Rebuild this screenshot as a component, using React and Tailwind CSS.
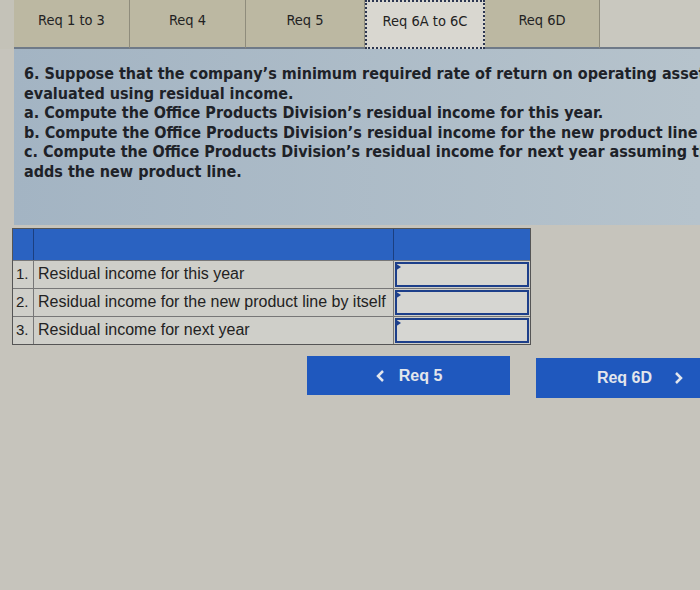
import React from 'react';

const tabs = ['Req 1 to 3', 'Req 4', 'Req 5', 'Req 6A to 6C', 'Req 6D'];
const tabWidths = ['w-[116px]', 'w-[116px]', 'w-[119px]', 'w-[120px]', 'w-[115px]'];

const lines = [
    "6. Suppose that the company\u2019s minimum required rate of return on operating assets is 15% and that performance is",
    'evaluated using residual income.',
    'a. Compute the Office Products Division\u2019s residual income for this year.',
    'b. Compute the Office Products Division\u2019s residual income for the new product line by itself.',
    'c. Compute the Office Products Division\u2019s residual income for next year assuming that it',
    'adds the new product line.',
];

const rows = [
    'Residual income for this year',
    'Residual income for the new product line by itself',
    'Residual income for next year',
];

export default function App() {
    return (
        <div className="w-[700px] h-[590px] overflow-hidden bg-[#c6c4bc] font-['Liberation_Sans',sans-serif]">
            {/* tab bar */}
            <div className="flex h-[49px] pl-[14px] bg-[#c4c2b8]">
                {tabs.map((t, i) => (
                    <div
                        key={t}
                        className={
                            tabWidths[i] +
                            ' flex items-center justify-center text-[14.5px] text-[#222] font-["DejaVu_Sans_Condensed",sans-serif] ' +
                            (i === 3
                                ? 'bg-[#d9d7d0] border-2 border-dotted border-[#2b3550] pb-[5px]'
                                : 'bg-[#bcb8a2] border-r border-[#8f8c7c] border-b-2 border-b-[#6f7a88] pb-[6px]')
                        }
                    >
                        {t}
                    </div>
                ))}
                <div className="flex-1 bg-[#c9c8bf] border-b-2 border-b-[#6f7a88]" />
            </div>

            {/* question */}
            <div className="ml-[14px] h-[176px] bg-gradient-to-r from-[#a3b4c3] to-[#b6c3cc] pt-[15px] pl-[10px] overflow-hidden">
                {lines.map((l) => (
                    <div
                        key={l}
                        className="whitespace-nowrap text-[16px] leading-[19.6px] text-[#1e2228] font-bold font-['DejaVu_Sans_Condensed',sans-serif]"
                    >
                        {l}
                    </div>
                ))}
            </div>

            {/* table */}
            <div className="mt-[3px] ml-[12px] w-[519px] border border-[#555]">
                <div className="flex h-[31px] bg-[#2a62c1]">
                    <div className="w-[21px] border-r border-[#1b3f80]" />
                    <div className="w-[360px] border-r border-[#1b3f80]" />
                    <div className="flex-1" />
                </div>
                {rows.map((r, i) => (
                    <div key={r} className="flex h-[28px] bg-[#cfcfc9] border-t border-[#777]">
                        <div className="w-[21px] border-r border-[#777] text-[15px] leading-[26px] text-[#222] pl-[3px]">
                            {i + 1}.
                        </div>
                        <div className="w-[360px] border-r border-[#777] text-[16px] leading-[26px] text-[#222] pl-[4px] whitespace-nowrap">
                            {r}
                        </div>
                        <div className="flex-1 relative p-[1px]">
                            <div className="h-full border-2 border-[#1d3f8a] bg-[#d6d6d2]" />
                            <div className="absolute left-[1px] top-[2px] w-0 h-0 border-t-[4px] border-b-[4px] border-l-[6px] border-t-transparent border-b-transparent border-l-[#1d3f8a]" />
                        </div>
                    </div>
                ))}
            </div>

            {/* nav buttons */}
            <div className="flex mt-[11px] ml-[307px] gap-[26px]">
                <div className="w-[203px] h-[39px] bg-[#1f58be] flex items-center justify-center gap-[14px] text-[#e3e6ec] font-bold text-[16px]">
                    <svg width="10" height="14" viewBox="0 0 10 14">
                        <path d="M8 2 L3 7 L8 12" fill="none" stroke="currentColor" strokeWidth="2.5" />
                    </svg>
                    <span>Req 5</span>
                </div>
                <div className="flex-1 h-[40px] mt-[2px] bg-[#1f58be] flex items-center justify-end pr-[16px] gap-[22px] text-[#e3e6ec] font-bold text-[16px]">
                    <span>Req 6D</span>
                    <svg width="10" height="14" viewBox="0 0 10 14">
                        <path d="M2 2 L7 7 L2 12" fill="none" stroke="currentColor" strokeWidth="2.5" />
                    </svg>
                </div>
            </div>
        </div>
    );
}
